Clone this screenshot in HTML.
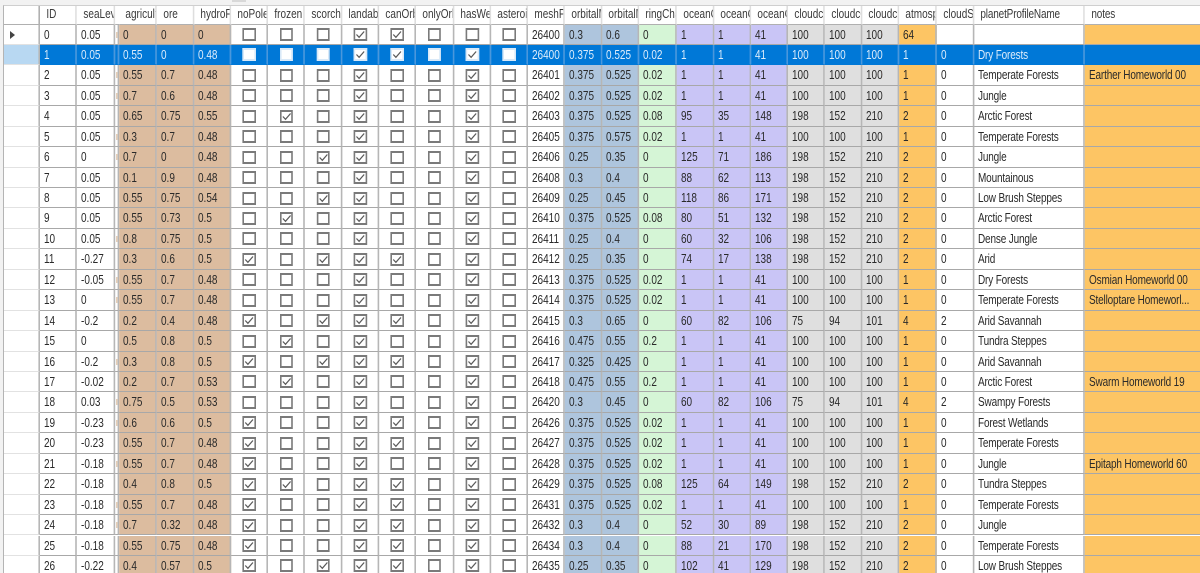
<!DOCTYPE html>
<html><head><meta charset="utf-8"><style>
html,body{margin:0;padding:0;width:1200px;height:573px;overflow:hidden;background:#f2f2f2}
#g{position:absolute;left:0;top:0;width:1200px;height:573px;overflow:hidden;filter:blur(.35px);font:12.5px/20px "Liberation Sans",sans-serif;color:#2a2a2a}
#bg{position:absolute;left:3px;top:5px;width:1197px;height:568px;background:#fff;border-left:1px solid #b4b4b4;border-top:1px solid #cfcfcf;box-sizing:border-box}
#blob{position:absolute;left:232px;top:0;width:14px;height:2px;background:#d8d8d8}
.r{position:absolute;left:4px;width:1495px;height:20.44px;display:grid;grid-template-columns:45px 46.25px 47.5px 5px 47.5px 46.25px 46.25px 46.25px 46.25px 46.25px 46.25px 46.25px 47.5px 46.25px 46.25px 46.25px 46.25px 46.25px 47.5px 46.25px 46.25px 46.25px 46.25px 46.25px 46.25px 47.5px 46.25px 138.75px 143.75px;transform:scaleX(.8);transform-origin:0 0;background:#fff}
.r>i{display:block;position:relative;font-style:normal;box-sizing:border-box;overflow:hidden;white-space:nowrap;padding-left:5px;border-right:2px solid #b6b6b6;border-bottom:1px solid #a8a8a8;height:20.44px}
.r>i:first-child{border-bottom-color:#e2e2e2;padding:0}
.r>i:nth-child(n+5):nth-child(-n+7){background:#dcbc9f}
.r>i:nth-child(n+17):nth-child(-n+18){background:#aec5dd}
.r>i:nth-child(19){background:#d5f5d6}
.r>i:nth-child(n+20):nth-child(-n+22){background:#c9c5f6}
.r>i:nth-child(n+23):nth-child(-n+25){background:#dfdfdf}
.r>i:nth-child(26),.r>i:nth-child(29){background:#fdc564}
.r>i:nth-child(n+28){letter-spacing:-.2px}
.r>i:last-child{border-right:0}
.r>i.n{padding:0}
.r>i.s::after{content:"";position:absolute;right:0;top:7px;width:2px;height:6px;background:#e6cfb8}
.o,.x{padding:0!important}
.o::before,.x::before{content:"";position:absolute;left:14.5px;top:3.5px;width:16.5px;height:13px;box-sizing:border-box;border:2px solid #7a7a7a;background:#fff}
.x svg{position:absolute;left:14.5px;top:3.5px;width:16.5px;height:13px;fill:none;stroke:#5a5a5a;stroke-width:1.1}
.h{top:6px;height:18.5px;background:#fff}
.h>i{height:18.5px;line-height:17px;background:#fff!important;border-right:2px solid #dedede;border-bottom:1px solid #b0b0b0;color:#3a3a3a;padding-left:8px}
.h>i:first-child{border-bottom-color:#b0b0b0;border-right-color:#b0b0b0}
.h>i.n{border-right:0}
.r.sel>i:nth-child(n+2){background:#0078d7;color:#dcecfb;border-bottom-color:#0078d7;border-right-color:#4a97dc}
.r.sel>i:first-child{background:#b8d8f2;border-bottom-color:#e2e2e2}
.sel .o::before,.sel .x::before{border-color:#d9e9f8}
#tri{position:absolute;left:10px;top:31px;width:0;height:0;border-left:5px solid #444;border-top:4px solid transparent;border-bottom:4px solid transparent}
</style></head><body>
<svg width="0" height="0" style="position:absolute"><symbol id="k" viewBox="0 0 12 12" preserveAspectRatio="none"><path d="M2.6 6 5 8.6 9.6 3.2"/></symbol></svg>
<div id="g"><div id="bg"></div><div id="blob"></div>
<div class="r h"><i></i><i>ID</i><i>seaLevel</i><i class="n"></i><i>agriculture</i><i>ore</i><i>hydroFrac</i><i>noPole</i><i>frozen</i><i>scorch</i><i>landable</i><i>canOrbit</i><i>onlyOrbit</i><i>hasWeather</i><i>asteroid</i><i>meshPre</i><i>orbitalMin</i><i>orbitalMax</i><i>ringChance</i><i>oceanC</i><i>oceanC</i><i>oceanC</i><i>cloudcR</i><i>cloudcG</i><i>cloudcB</i><i>atmosphere</i><i>cloudSpeed</i><i>planetProfileName</i><i>notes</i></div>
<div class="r" style="top:24.5px"><i></i><i>0</i><i>0.05</i><i class="n s"></i><i>0</i><i>0</i><i>0</i><i class="o"></i><i class="o"></i><i class="o"></i><i class="x"><svg><use href="#k"/></svg></i><i class="x"><svg><use href="#k"/></svg></i><i class="o"></i><i class="o"></i><i class="o"></i><i>26400</i><i>0.3</i><i>0.6</i><i>0</i><i>1</i><i>1</i><i>41</i><i>100</i><i>100</i><i>100</i><i>64</i><i></i><i></i><i></i></div>
<div class="r sel" style="top:44.94px"><i></i><i>1</i><i>0.05</i><i class="n"></i><i>0.55</i><i>0</i><i>0.48</i><i class="o"></i><i class="o"></i><i class="o"></i><i class="x"><svg><use href="#k"/></svg></i><i class="x"><svg><use href="#k"/></svg></i><i class="o"></i><i class="x"><svg><use href="#k"/></svg></i><i class="o"></i><i>26400</i><i>0.375</i><i>0.525</i><i>0.02</i><i>1</i><i>1</i><i>41</i><i>100</i><i>100</i><i>100</i><i>1</i><i>0</i><i>Dry Forests</i><i></i></div>
<div class="r" style="top:65.38px"><i></i><i>2</i><i>0.05</i><i class="n s"></i><i>0.55</i><i>0.7</i><i>0.48</i><i class="o"></i><i class="o"></i><i class="o"></i><i class="x"><svg><use href="#k"/></svg></i><i class="o"></i><i class="o"></i><i class="x"><svg><use href="#k"/></svg></i><i class="o"></i><i>26401</i><i>0.375</i><i>0.525</i><i>0.02</i><i>1</i><i>1</i><i>41</i><i>100</i><i>100</i><i>100</i><i>1</i><i>0</i><i>Temperate Forests</i><i>Earther Homeworld 00</i></div>
<div class="r" style="top:85.82px"><i></i><i>3</i><i>0.05</i><i class="n s"></i><i>0.7</i><i>0.6</i><i>0.48</i><i class="o"></i><i class="o"></i><i class="o"></i><i class="x"><svg><use href="#k"/></svg></i><i class="o"></i><i class="o"></i><i class="x"><svg><use href="#k"/></svg></i><i class="o"></i><i>26402</i><i>0.375</i><i>0.525</i><i>0.02</i><i>1</i><i>1</i><i>41</i><i>100</i><i>100</i><i>100</i><i>1</i><i>0</i><i>Jungle</i><i></i></div>
<div class="r" style="top:106.26px"><i></i><i>4</i><i>0.05</i><i class="n"></i><i>0.65</i><i>0.75</i><i>0.55</i><i class="o"></i><i class="x"><svg><use href="#k"/></svg></i><i class="o"></i><i class="x"><svg><use href="#k"/></svg></i><i class="o"></i><i class="o"></i><i class="x"><svg><use href="#k"/></svg></i><i class="o"></i><i>26403</i><i>0.375</i><i>0.525</i><i>0.08</i><i>95</i><i>35</i><i>148</i><i>198</i><i>152</i><i>210</i><i>2</i><i>0</i><i>Arctic Forest</i><i></i></div>
<div class="r" style="top:126.7px"><i></i><i>5</i><i>0.05</i><i class="n s"></i><i>0.3</i><i>0.7</i><i>0.48</i><i class="o"></i><i class="o"></i><i class="o"></i><i class="x"><svg><use href="#k"/></svg></i><i class="o"></i><i class="o"></i><i class="x"><svg><use href="#k"/></svg></i><i class="o"></i><i>26405</i><i>0.375</i><i>0.575</i><i>0.02</i><i>1</i><i>1</i><i>41</i><i>100</i><i>100</i><i>100</i><i>1</i><i>0</i><i>Temperate Forests</i><i></i></div>
<div class="r" style="top:147.14px"><i></i><i>6</i><i>0</i><i class="n s"></i><i>0.7</i><i>0</i><i>0.48</i><i class="o"></i><i class="o"></i><i class="x"><svg><use href="#k"/></svg></i><i class="x"><svg><use href="#k"/></svg></i><i class="o"></i><i class="o"></i><i class="x"><svg><use href="#k"/></svg></i><i class="o"></i><i>26406</i><i>0.25</i><i>0.35</i><i>0</i><i>125</i><i>71</i><i>186</i><i>198</i><i>152</i><i>210</i><i>2</i><i>0</i><i>Jungle</i><i></i></div>
<div class="r" style="top:167.58px"><i></i><i>7</i><i>0.05</i><i class="n"></i><i>0.1</i><i>0.9</i><i>0.48</i><i class="o"></i><i class="o"></i><i class="o"></i><i class="x"><svg><use href="#k"/></svg></i><i class="o"></i><i class="o"></i><i class="x"><svg><use href="#k"/></svg></i><i class="o"></i><i>26408</i><i>0.3</i><i>0.4</i><i>0</i><i>88</i><i>62</i><i>113</i><i>198</i><i>152</i><i>210</i><i>2</i><i>0</i><i>Mountainous</i><i></i></div>
<div class="r" style="top:188.02px"><i></i><i>8</i><i>0.05</i><i class="n"></i><i>0.55</i><i>0.75</i><i>0.54</i><i class="o"></i><i class="o"></i><i class="x"><svg><use href="#k"/></svg></i><i class="x"><svg><use href="#k"/></svg></i><i class="o"></i><i class="o"></i><i class="x"><svg><use href="#k"/></svg></i><i class="o"></i><i>26409</i><i>0.25</i><i>0.45</i><i>0</i><i>118</i><i>86</i><i>171</i><i>198</i><i>152</i><i>210</i><i>2</i><i>0</i><i>Low Brush Steppes</i><i></i></div>
<div class="r" style="top:208.46px"><i></i><i>9</i><i>0.05</i><i class="n"></i><i>0.55</i><i>0.73</i><i>0.5</i><i class="o"></i><i class="x"><svg><use href="#k"/></svg></i><i class="o"></i><i class="x"><svg><use href="#k"/></svg></i><i class="o"></i><i class="o"></i><i class="x"><svg><use href="#k"/></svg></i><i class="o"></i><i>26410</i><i>0.375</i><i>0.525</i><i>0.08</i><i>80</i><i>51</i><i>132</i><i>198</i><i>152</i><i>210</i><i>2</i><i>0</i><i>Arctic Forest</i><i></i></div>
<div class="r" style="top:228.9px"><i></i><i>10</i><i>0.05</i><i class="n s"></i><i>0.8</i><i>0.75</i><i>0.5</i><i class="o"></i><i class="o"></i><i class="o"></i><i class="x"><svg><use href="#k"/></svg></i><i class="o"></i><i class="o"></i><i class="x"><svg><use href="#k"/></svg></i><i class="o"></i><i>26411</i><i>0.25</i><i>0.4</i><i>0</i><i>60</i><i>32</i><i>106</i><i>198</i><i>152</i><i>210</i><i>2</i><i>0</i><i>Dense Jungle</i><i></i></div>
<div class="r" style="top:249.34px"><i></i><i>11</i><i>-0.27</i><i class="n"></i><i>0.3</i><i>0.6</i><i>0.5</i><i class="x"><svg><use href="#k"/></svg></i><i class="o"></i><i class="x"><svg><use href="#k"/></svg></i><i class="x"><svg><use href="#k"/></svg></i><i class="x"><svg><use href="#k"/></svg></i><i class="o"></i><i class="x"><svg><use href="#k"/></svg></i><i class="o"></i><i>26412</i><i>0.25</i><i>0.35</i><i>0</i><i>74</i><i>17</i><i>138</i><i>198</i><i>152</i><i>210</i><i>2</i><i>0</i><i>Arid</i><i></i></div>
<div class="r" style="top:269.78px"><i></i><i>12</i><i>-0.05</i><i class="n s"></i><i>0.55</i><i>0.7</i><i>0.48</i><i class="o"></i><i class="o"></i><i class="o"></i><i class="x"><svg><use href="#k"/></svg></i><i class="o"></i><i class="o"></i><i class="x"><svg><use href="#k"/></svg></i><i class="o"></i><i>26413</i><i>0.375</i><i>0.525</i><i>0.02</i><i>1</i><i>1</i><i>41</i><i>100</i><i>100</i><i>100</i><i>1</i><i>0</i><i>Dry Forests</i><i>Osmian Homeworld 00</i></div>
<div class="r" style="top:290.22px"><i></i><i>13</i><i>0</i><i class="n s"></i><i>0.55</i><i>0.7</i><i>0.48</i><i class="o"></i><i class="o"></i><i class="o"></i><i class="x"><svg><use href="#k"/></svg></i><i class="o"></i><i class="o"></i><i class="x"><svg><use href="#k"/></svg></i><i class="o"></i><i>26414</i><i>0.375</i><i>0.525</i><i>0.02</i><i>1</i><i>1</i><i>41</i><i>100</i><i>100</i><i>100</i><i>1</i><i>0</i><i>Temperate Forests</i><i>Stelloptare Homeworl...</i></div>
<div class="r" style="top:310.66px"><i></i><i>14</i><i>-0.2</i><i class="n"></i><i>0.2</i><i>0.4</i><i>0.48</i><i class="x"><svg><use href="#k"/></svg></i><i class="o"></i><i class="x"><svg><use href="#k"/></svg></i><i class="x"><svg><use href="#k"/></svg></i><i class="x"><svg><use href="#k"/></svg></i><i class="o"></i><i class="x"><svg><use href="#k"/></svg></i><i class="o"></i><i>26415</i><i>0.3</i><i>0.65</i><i>0</i><i>60</i><i>82</i><i>106</i><i>75</i><i>94</i><i>101</i><i>4</i><i>2</i><i>Arid Savannah</i><i></i></div>
<div class="r" style="top:331.1px"><i></i><i>15</i><i>0</i><i class="n"></i><i>0.5</i><i>0.8</i><i>0.5</i><i class="o"></i><i class="x"><svg><use href="#k"/></svg></i><i class="o"></i><i class="x"><svg><use href="#k"/></svg></i><i class="o"></i><i class="o"></i><i class="x"><svg><use href="#k"/></svg></i><i class="o"></i><i>26416</i><i>0.475</i><i>0.55</i><i>0.2</i><i>1</i><i>1</i><i>41</i><i>100</i><i>100</i><i>100</i><i>1</i><i>0</i><i>Tundra Steppes</i><i></i></div>
<div class="r" style="top:351.54px"><i></i><i>16</i><i>-0.2</i><i class="n s"></i><i>0.3</i><i>0.8</i><i>0.5</i><i class="x"><svg><use href="#k"/></svg></i><i class="o"></i><i class="x"><svg><use href="#k"/></svg></i><i class="x"><svg><use href="#k"/></svg></i><i class="x"><svg><use href="#k"/></svg></i><i class="o"></i><i class="x"><svg><use href="#k"/></svg></i><i class="o"></i><i>26417</i><i>0.325</i><i>0.425</i><i>0</i><i>1</i><i>1</i><i>41</i><i>100</i><i>100</i><i>100</i><i>1</i><i>0</i><i>Arid Savannah</i><i></i></div>
<div class="r" style="top:371.98px"><i></i><i>17</i><i>-0.02</i><i class="n"></i><i>0.2</i><i>0.7</i><i>0.53</i><i class="o"></i><i class="x"><svg><use href="#k"/></svg></i><i class="o"></i><i class="x"><svg><use href="#k"/></svg></i><i class="o"></i><i class="o"></i><i class="x"><svg><use href="#k"/></svg></i><i class="o"></i><i>26418</i><i>0.475</i><i>0.55</i><i>0.2</i><i>1</i><i>1</i><i>41</i><i>100</i><i>100</i><i>100</i><i>1</i><i>0</i><i>Arctic Forest</i><i>Swarm Homeworld 19</i></div>
<div class="r" style="top:392.42px"><i></i><i>18</i><i>0.03</i><i class="n s"></i><i>0.75</i><i>0.5</i><i>0.53</i><i class="o"></i><i class="o"></i><i class="o"></i><i class="x"><svg><use href="#k"/></svg></i><i class="o"></i><i class="o"></i><i class="x"><svg><use href="#k"/></svg></i><i class="o"></i><i>26420</i><i>0.3</i><i>0.45</i><i>0</i><i>60</i><i>82</i><i>106</i><i>75</i><i>94</i><i>101</i><i>4</i><i>2</i><i>Swampy Forests</i><i></i></div>
<div class="r" style="top:412.86px"><i></i><i>19</i><i>-0.23</i><i class="n s"></i><i>0.6</i><i>0.6</i><i>0.5</i><i class="x"><svg><use href="#k"/></svg></i><i class="o"></i><i class="o"></i><i class="x"><svg><use href="#k"/></svg></i><i class="x"><svg><use href="#k"/></svg></i><i class="o"></i><i class="x"><svg><use href="#k"/></svg></i><i class="o"></i><i>26426</i><i>0.375</i><i>0.525</i><i>0.02</i><i>1</i><i>1</i><i>41</i><i>100</i><i>100</i><i>100</i><i>1</i><i>0</i><i>Forest Wetlands</i><i></i></div>
<div class="r" style="top:433.3px"><i></i><i>20</i><i>-0.23</i><i class="n"></i><i>0.55</i><i>0.7</i><i>0.48</i><i class="x"><svg><use href="#k"/></svg></i><i class="o"></i><i class="o"></i><i class="x"><svg><use href="#k"/></svg></i><i class="x"><svg><use href="#k"/></svg></i><i class="o"></i><i class="x"><svg><use href="#k"/></svg></i><i class="o"></i><i>26427</i><i>0.375</i><i>0.525</i><i>0.02</i><i>1</i><i>1</i><i>41</i><i>100</i><i>100</i><i>100</i><i>1</i><i>0</i><i>Temperate Forests</i><i></i></div>
<div class="r" style="top:453.74px"><i></i><i>21</i><i>-0.18</i><i class="n s"></i><i>0.55</i><i>0.7</i><i>0.48</i><i class="x"><svg><use href="#k"/></svg></i><i class="o"></i><i class="o"></i><i class="x"><svg><use href="#k"/></svg></i><i class="o"></i><i class="o"></i><i class="x"><svg><use href="#k"/></svg></i><i class="o"></i><i>26428</i><i>0.375</i><i>0.525</i><i>0.02</i><i>1</i><i>1</i><i>41</i><i>100</i><i>100</i><i>100</i><i>1</i><i>0</i><i>Jungle</i><i>Epitaph Homeworld 60</i></div>
<div class="r" style="top:474.18px"><i></i><i>22</i><i>-0.18</i><i class="n"></i><i>0.4</i><i>0.8</i><i>0.5</i><i class="x"><svg><use href="#k"/></svg></i><i class="x"><svg><use href="#k"/></svg></i><i class="o"></i><i class="x"><svg><use href="#k"/></svg></i><i class="x"><svg><use href="#k"/></svg></i><i class="o"></i><i class="x"><svg><use href="#k"/></svg></i><i class="o"></i><i>26429</i><i>0.375</i><i>0.525</i><i>0.08</i><i>125</i><i>64</i><i>149</i><i>198</i><i>152</i><i>210</i><i>2</i><i>0</i><i>Tundra Steppes</i><i></i></div>
<div class="r" style="top:494.62px"><i></i><i>23</i><i>-0.18</i><i class="n s"></i><i>0.55</i><i>0.7</i><i>0.48</i><i class="x"><svg><use href="#k"/></svg></i><i class="o"></i><i class="o"></i><i class="x"><svg><use href="#k"/></svg></i><i class="x"><svg><use href="#k"/></svg></i><i class="o"></i><i class="x"><svg><use href="#k"/></svg></i><i class="o"></i><i>26431</i><i>0.375</i><i>0.525</i><i>0.02</i><i>1</i><i>1</i><i>41</i><i>100</i><i>100</i><i>100</i><i>1</i><i>0</i><i>Temperate Forests</i><i></i></div>
<div class="r" style="top:515.06px"><i></i><i>24</i><i>-0.18</i><i class="n s"></i><i>0.7</i><i>0.32</i><i>0.48</i><i class="x"><svg><use href="#k"/></svg></i><i class="o"></i><i class="o"></i><i class="x"><svg><use href="#k"/></svg></i><i class="x"><svg><use href="#k"/></svg></i><i class="o"></i><i class="x"><svg><use href="#k"/></svg></i><i class="o"></i><i>26432</i><i>0.3</i><i>0.4</i><i>0</i><i>52</i><i>30</i><i>89</i><i>198</i><i>152</i><i>210</i><i>2</i><i>0</i><i>Jungle</i><i></i></div>
<div class="r" style="top:535.5px"><i></i><i>25</i><i>-0.18</i><i class="n"></i><i>0.55</i><i>0.75</i><i>0.48</i><i class="x"><svg><use href="#k"/></svg></i><i class="o"></i><i class="o"></i><i class="x"><svg><use href="#k"/></svg></i><i class="x"><svg><use href="#k"/></svg></i><i class="o"></i><i class="x"><svg><use href="#k"/></svg></i><i class="o"></i><i>26434</i><i>0.3</i><i>0.4</i><i>0</i><i>88</i><i>21</i><i>170</i><i>198</i><i>152</i><i>210</i><i>2</i><i>0</i><i>Temperate Forests</i><i></i></div>
<div class="r" style="top:555.94px"><i></i><i>26</i><i>-0.22</i><i class="n"></i><i>0.4</i><i>0.57</i><i>0.5</i><i class="x"><svg><use href="#k"/></svg></i><i class="o"></i><i class="x"><svg><use href="#k"/></svg></i><i class="x"><svg><use href="#k"/></svg></i><i class="x"><svg><use href="#k"/></svg></i><i class="o"></i><i class="x"><svg><use href="#k"/></svg></i><i class="o"></i><i>26435</i><i>0.25</i><i>0.35</i><i>0</i><i>102</i><i>41</i><i>129</i><i>198</i><i>152</i><i>210</i><i>2</i><i>0</i><i>Low Brush Steppes</i><i></i></div>
<div id="tri"></div>
</div></body></html>
